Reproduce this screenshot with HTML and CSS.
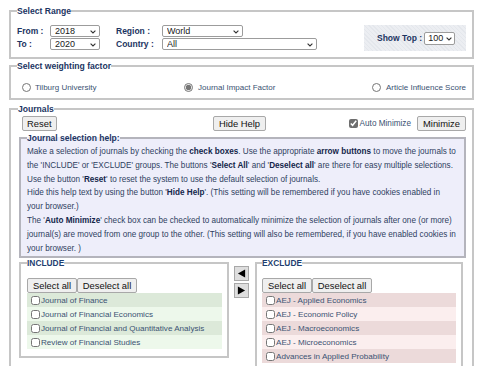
FILE: index.html
```html
<!DOCTYPE html>
<html lang="en">
<head>
<meta charset="utf-8">
<title>Journal ranking</title>
<link rel="stylesheet" href="styles.css">
</head>
<body>
<form class="page">
  <fieldset class="box range">
    <legend class="box-title">Select Range</legend>
    <div class="range-row">
      <div class="range-grid">
        <label class="lbl">From :</label>
        <span class="sel w50"><select><option>2018</option></select><svg class="chev" viewBox="0 0 6 4"><path d="M0.6 0.6 L3 3 L5.4 0.6"/></svg></span>
        <label class="lbl">Region :</label>
        <span class="sel w81"><select><option>World</option></select><svg class="chev" viewBox="0 0 6 4"><path d="M0.6 0.6 L3 3 L5.4 0.6"/></svg></span>
        <label class="lbl">To :</label>
        <span class="sel w50"><select><option>2020</option></select><svg class="chev" viewBox="0 0 6 4"><path d="M0.6 0.6 L3 3 L5.4 0.6"/></svg></span>
        <label class="lbl">Country :</label>
        <span class="sel w155"><select><option>All</option></select><svg class="chev" viewBox="0 0 6 4"><path d="M0.6 0.6 L3 3 L5.4 0.6"/></svg></span>
      </div>
      <div class="showtop">
        <label class="lbl">Show Top :</label>
        <span class="sel w31 tall"><select><option>100</option></select><svg class="chev" viewBox="0 0 6 4"><path d="M0.6 0.6 L3 3 L5.4 0.6"/></svg></span>
      </div>
    </div>
  </fieldset>

  <fieldset class="box weight">
    <legend class="box-title">Select weighting factor</legend>
    <div class="weight-row">
      <label class="opt first"><input type="radio" name="w">Tilburg University</label>
      <label class="opt"><input type="radio" name="w" checked>Journal Impact Factor</label>
      <label class="opt"><input type="radio" name="w">Article Influence Score</label>
    </div>
  </fieldset>

  <fieldset class="box journals">
    <legend class="box-title">Journals</legend>
    <div class="toolbar">
      <button type="button" class="btn reset">Reset</button>
      <button type="button" class="btn mid">Hide Help</button>
      <div class="tool-right">
        <label class="auto"><input type="checkbox" checked>Auto Minimize</label>
        <button type="button" class="btn">Minimize</button>
      </div>
    </div>

    <fieldset class="help">
      <legend class="help-title">Journal selection help:</legend>
      <p>Make a selection of journals by checking the <b>check boxes</b>. Use the appropriate <b>arrow buttons</b> to move the journals to<br>the 'INCLUDE' or 'EXCLUDE' groups. The buttons '<b>Select All</b>' and '<b>Deselect all</b>' are there for easy multiple selections.<br>Use the button '<b>Reset</b>' to reset the system to use the default selection of journals.</p>
      <p>Hide this help text by using the button '<b>Hide Help</b>'. (This setting will be remembered if you have cookies enabled in<br>your browser.)</p>
      <p>The '<b>Auto Minimize</b>' check box can be checked to automatically minimize the selection of journals after one (or more)<br>journal(s) are moved from one group to the other. (This setting will also be remembered, if you have enabled cookies in<br>your browser. )</p>
    </fieldset>

    <div class="groups">
      <fieldset class="group include">
        <legend class="group-title">INCLUDE</legend>
        <div class="group-btns">
          <button type="button" class="btn sa">Select all</button><button type="button" class="btn da">Deselect all</button>
        </div>
        <ul class="list">
          <li><input type="checkbox">Journal of Finance</li>
          <li><input type="checkbox">Journal of Financial Economics</li>
          <li><input type="checkbox">Journal of Financial and Quantitative Analysis</li>
          <li><input type="checkbox">Review of Financial Studies</li>
        </ul>
      </fieldset>

      <div class="arrows">
        <button type="button" class="arrow" aria-label="Move left"><svg viewBox="0 0 10 10"><path d="M1 5 L9 0.5 L9 9.5 Z"/></svg></button>
        <button type="button" class="arrow" aria-label="Move right"><svg viewBox="0 0 10 10"><path d="M9 5 L1 0.5 L1 9.5 Z"/></svg></button>
      </div>

      <fieldset class="group exclude">
        <legend class="group-title">EXCLUDE</legend>
        <div class="group-btns">
          <button type="button" class="btn sa">Select all</button><button type="button" class="btn da">Deselect all</button>
        </div>
        <ul class="list">
          <li><input type="checkbox">AEJ - Applied Economics</li>
          <li><input type="checkbox">AEJ - Economic Policy</li>
          <li><input type="checkbox">AEJ - Macroeconomics</li>
          <li><input type="checkbox">AEJ - Microeconomics</li>
          <li><input type="checkbox">Advances in Applied Probability</li>
        </ul>
      </fieldset>
    </div>
  </fieldset>
</form>
</body>
</html>
```

FILE: styles.css
```css
* { box-sizing: border-box; }
html, body { margin: 0; background: #fff; }
body {
  font-family: "Liberation Sans", Arial, sans-serif;
  color: #2b3b5b;
  padding: 5px 6px 0 9px;
}
.page { display: flex; flex-direction: column; }

.box {
  margin: 0;
  border: 2px solid #c6c6c6;
  padding: 8px 6px 6px 6px;
  min-width: 0;
}
.box-title {
  padding: 0;
  font-size: 8.6px;
  line-height: 12px;
  font-weight: bold;
  color: #1c3562;
}
.lbl {
  font-size: 8.5px;
  font-weight: bold;
  color: #1c3562;
  line-height: 12px;
  white-space: nowrap;
}

/* range */
.range-row { display: flex; align-items: flex-start; justify-content: space-between; }
.range-grid {
  display: grid;
  grid-template-columns: 33px 66px 46px auto;
  row-gap: 1px;
  align-items: center;
}
.sel { position: relative; display: block; height: 12px; }
.sel.tall { height: 13px; }
.sel select {
  -webkit-appearance: none;
  appearance: none;
  display: block;
  width: 100%;
  height: 100%;
  margin: 0;
  border: 1px solid #9c9c9c;
  border-radius: 2px;
  background: #fff;
  font-family: "Liberation Sans", Arial, sans-serif;
  font-size: 9px;
  color: #1a1a1a;
  padding: 0 0 0 4px;
}
.chev {
  position: absolute;
  right: 4px;
  top: 50%;
  width: 6px;
  height: 4px;
  margin-top: -1px;
  fill: none;
  stroke: #333;
  stroke-width: 1.1;
  pointer-events: none;
}
.w50 { width: 50px; }
.w81 { width: 81px; }
.w155 { width: 155px; }
.w31 { width: 31px; }
.w31 .chev { right: 3px; }
.w31 select { padding-left: 3px; }
.showtop {
  width: 102px;
  height: 26px;
  display: flex;
  align-items: center;
  padding-left: 13px;
  gap: 2px;
  background: repeating-linear-gradient(45deg, #e4e7ec 0 1px, #eceef2 1px 3px);
}

/* weighting */
.weight { margin-top: 1px; padding-top: 9px; padding-bottom: 5px; }
.weight-row {
  display: grid;
  grid-template-columns: 167px 1fr auto;
  align-items: center;
  height: 12px;
}
.opt {
  display: flex;
  align-items: center;
  font-size: 8px;
  color: #3b5272;
  white-space: nowrap;
}
.opt input {
  width: 9px;
  height: 9px;
  margin: 0 5px 0 0;
  accent-color: #767676;
}
.opt.first input { margin-left: 5px; margin-right: 4px; }

/* journals */
.journals { margin-top: 3px; padding: 1px 6px 10px 7px; }
.toolbar {
  display: grid;
  grid-template-columns: 1fr auto 1fr;
  align-items: center;
  height: 15px;
}
.toolbar > .btn.reset { justify-self: start; margin-left: 4px; padding: 0 4px; }
.toolbar > .btn.mid { margin-right: 5px; }
.tool-right { justify-self: end; display: flex; align-items: center; gap: 6px; }
.btn {
  font-family: "Liberation Sans", Arial, sans-serif;
  font-size: 9.4px;
  color: #111;
  background: #efefef;
  border: 1px solid #a8a8a8;
  border-radius: 2px;
  height: 15px;
  padding: 0 5px;
  margin: 0;
  line-height: 13px;
}
.auto {
  display: flex;
  align-items: center;
  font-size: 8.2px;
  color: #3b5272;
}
.auto input {
  width: 9px;
  height: 9px;
  margin: 0 2px 0 0;
  accent-color: #6e6e6e;
}

.help {
  margin: 1px 0 0 1px;
  border: 2px solid #b4b4bc;
  background: #eeeefa;
  padding: 1px 6px 1px 6px;
  min-width: 0;
}
.help-title {
  padding: 0;
  font-size: 8.5px;
  line-height: 12px;
  font-weight: bold;
  color: #1c3562;
}
.help p {
  margin: 0;
  font-size: 8.17px;
  line-height: 13.8px;
  white-space: nowrap;
  color: #2f3f5f;
}
.help b { color: #14264a; }

.groups {
  display: grid;
  grid-template-columns: 210px 15px 209px;
  column-gap: 5px;
  align-items: start;
  margin: -1px 2px 0 1px;
}
.group {
  margin: 0;
  border: 2px solid #c6c6c6;
  padding: 9px 5px 7px 6px;
  min-width: 0;
}
.exclude { margin-left: 1px; padding-left: 5px; padding-bottom: 20px; }
.group-title {
  padding: 0;
  font-size: 8.4px;
  line-height: 12px;
  font-weight: bold;
  color: #1f3f70;
}
.group-btns { display: flex; }
.btn.sa { width: 50px; padding: 0; }
.btn.da { width: 60px; padding: 0; }
.list { list-style: none; margin: 0; padding: 0; }
.list li {
  height: 14px;
  display: flex;
  align-items: center;
  font-size: 8.1px;
  color: #3b5272;
  white-space: nowrap;
}
.list input {
  width: 9px;
  height: 9px;
  margin: 0 1px 0 4px;
}
.include li:nth-child(odd) { background: #dce9d9; }
.include li:nth-child(even) { background: #edf8eb; }
.exclude li:nth-child(odd) { background: #ecdada; }
.exclude li:nth-child(even) { background: #fbeeee; }

.arrows { display: flex; flex-direction: column; gap: 2px; margin-top: 9px; }
.arrow {
  width: 15px;
  height: 15px;
  padding: 0;
  margin: 0;
  border: 1px solid #a8a8a8;
  background: #dedede;
  display: flex;
  align-items: center;
  justify-content: center;
}
.arrow svg { width: 9px; height: 9px; fill: #000; }
```
